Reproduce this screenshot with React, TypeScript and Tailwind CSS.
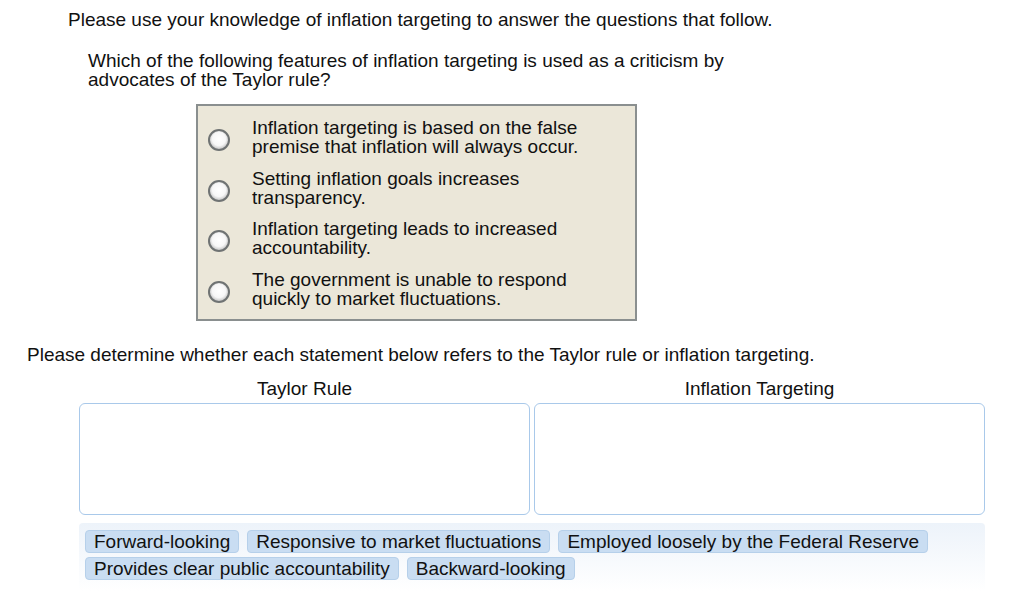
const options = [
  ["Inflation targeting is based on the false", "premise that inflation will always occur."],
  ["Setting inflation goals increases", "transparency."],
  ["Inflation targeting leads to increased", "accountability."],
  ["The government is unable to respond", "quickly to market fluctuations."],
];

const chipRows = [
  ["Forward-looking", "Responsive to market fluctuations", "Employed loosely by the Federal Reserve"],
  ["Provides clear public accountability", "Backward-looking"],
];

function Radio() {
  return (
    <svg width="24" height="24" viewBox="0 0 24 24" aria-hidden="true">
      <defs>
        <radialGradient id="radioFill" cx="50%" cy="45%" r="55%">
          <stop offset="0%" stopColor="#ffffff" />
          <stop offset="60%" stopColor="#f7f7f7" />
          <stop offset="100%" stopColor="#b9b9b9" />
        </radialGradient>
      </defs>
      <circle cx="12" cy="12" r="10" fill="url(#radioFill)" stroke="#6f7373" strokeWidth="2" />
    </svg>
  );
}

export default function App() {
  return (
    <div className="h-[614px] w-[1024px] overflow-hidden bg-white font-['Liberation_Sans',Arial,sans-serif] text-[19px] leading-[19px] text-[#111]">
      <p className="pl-[68px] pt-[10px]">
        Please use your knowledge of inflation targeting to answer the questions that follow.
      </p>

      <div className="mt-[22px] pl-[88px]">
        <p>Which of the following features of inflation targeting is used as a criticism by</p>
        <p>advocates of the Taylor rule?</p>
      </div>

      <div className="ml-[196px] mt-[15px] flex h-[217px] w-[441px] flex-col border-2 border-[#8a8f8f] bg-[#ebe7d9] pt-[9px]">
        {options.map((lines) => (
          <label key={lines[0]} className="flex h-[50.6px] items-center">
            <span className="ml-[9px] flex w-[24px] justify-center">
              <Radio />
            </span>
            <span className="ml-[21px] -translate-y-[3px]">
              <span className="block">{lines[0]}</span>
              <span className="block">{lines[1]}</span>
            </span>
          </label>
        ))}
      </div>

      <p className="mt-[24px] pl-[27px]">
        Please determine whether each statement below refers to the Taylor rule or inflation targeting.
      </p>

      <div className="ml-[79px] w-[906px]">
        <div className="mt-[15px] grid grid-cols-2 gap-[4px]">
          <p className="text-center">Taylor Rule</p>
          <p className="text-center">Inflation Targeting</p>
        </div>
        <div className="mt-[5px] grid grid-cols-2 gap-[4px]">
          <div className="h-[112px] rounded-[6px] border border-[#a9c9ea] bg-white" />
          <div className="h-[112px] rounded-[6px] border border-[#a9c9ea] bg-white" />
        </div>
        <div className="mt-[8px] flex h-[68px] flex-col gap-[4px] rounded-t-[4px] bg-gradient-to-b from-[#edf3fa] to-white px-[6px] pt-[7px]">
          {chipRows.map((row) => (
            <div key={row[0]} className="flex gap-[8px]">
              {row.map((chip) => (
                <span
                  key={chip}
                  className="flex h-[23px] items-center rounded-[4px] border border-[#b6d0ea] bg-[#c9ddf2] px-[8px]"
                >
                  {chip}
                </span>
              ))}
            </div>
          ))}
        </div>
      </div>
    </div>
  );
}
